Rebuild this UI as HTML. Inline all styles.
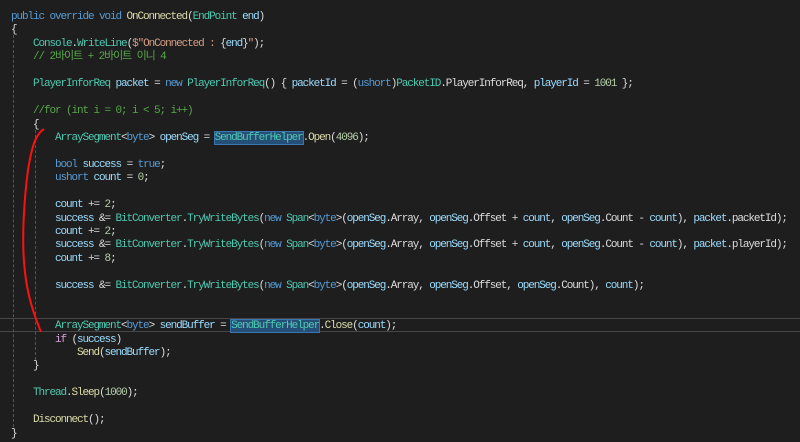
<!DOCTYPE html>
<html><head><meta charset="utf-8"><style>
html,body{margin:0;padding:0;background:#1e1e1e;width:800px;height:442px;overflow:hidden;position:relative}
#code{position:absolute;left:11px;top:11px;font-family:"Liberation Mono","Noto Sans CJK KR",monospace;font-size:11px;letter-spacing:-1.1px;color:#dcdcdc}
.l{height:13.45px;line-height:13.45px;white-space:pre}
.k{color:#569cd6}.t{color:#4ec9b0}.m{color:#dcdcaa}.v{color:#9cdcfe}.c{color:#57a64a}.n{color:#b5cea8}.s{color:#d69d85}.p{color:#d8a0df}
.sel{background:#264f78;outline:1px solid #3b76b0}
.guide{position:absolute;width:0;border-left:1px dashed #555}
</style></head><body>
<div style="position:absolute;left:0;top:318px;width:800px;height:12px;border-top:1px solid #464646;border-bottom:1px solid #464646"></div>
<div class="guide" style="left:13px;top:35px;height:392px"></div>
<div class="guide" style="left:35px;top:130px;height:230px"></div>
<div id="code"><div class="l"><span class="k">public override void</span> <span class="m">OnConnected</span>(<span class="t">EndPoint</span> <span class="v">end</span>)</div><div class="l">{</div><div class="l">    <span class="t">Console</span>.<span class="t">WriteLine</span>(<span class="s">$"OnConnected : </span>{<span class="v">end</span>}<span class="s">"</span>);</div><div class="l"><span class="c">    // 2바이트 + 2바이트 이니 4</span></div><div class="l"> </div><div class="l">    <span class="t">PlayerInforReq</span> <span class="v">packet</span> = <span class="k">new</span> <span class="t">PlayerInforReq</span>() { <span class="v">packetId</span> = (<span class="k">ushort</span>)<span class="t">PacketID</span>.PlayerInforReq, <span class="v">playerId</span> = <span class="n">1001</span> };</div><div class="l"> </div><div class="l"><span class="c">    //for (int i = 0; i &lt; 5; i++)</span></div><div class="l">    {</div><div class="l">        <span class="t">ArraySegment</span>&lt;<span class="k">byte</span>&gt; <span class="v">openSeg</span> = <span class="t sel">SendBufferHelper</span>.<span class="m">Open</span>(<span class="n">4096</span>);</div><div class="l"> </div><div class="l">        <span class="k">bool</span> <span class="v">success</span> = <span class="k">true</span>;</div><div class="l">        <span class="k">ushort</span> <span class="v">count</span> = <span class="n">0</span>;</div><div class="l"> </div><div class="l">        <span class="v">count</span> += <span class="n">2</span>;</div><div class="l">        <span class="v">success</span> &amp;= <span class="t">BitConverter</span>.<span class="t">TryWriteBytes</span>(<span class="k">new</span> <span class="t">Span</span>&lt;<span class="k">byte</span>&gt;(<span class="v">openSeg</span>.Array, <span class="v">openSeg</span>.Offset + <span class="v">count</span>, <span class="v">openSeg</span>.Count - <span class="v">count</span>), <span class="v">packet</span>.packetId);</div><div class="l">        <span class="v">count</span> += <span class="n">2</span>;</div><div class="l">        <span class="v">success</span> &amp;= <span class="t">BitConverter</span>.<span class="t">TryWriteBytes</span>(<span class="k">new</span> <span class="t">Span</span>&lt;<span class="k">byte</span>&gt;(<span class="v">openSeg</span>.Array, <span class="v">openSeg</span>.Offset + <span class="v">count</span>, <span class="v">openSeg</span>.Count - <span class="v">count</span>), <span class="v">packet</span>.playerId);</div><div class="l">        <span class="v">count</span> += <span class="n">8</span>;</div><div class="l"> </div><div class="l">        <span class="v">success</span> &amp;= <span class="t">BitConverter</span>.<span class="t">TryWriteBytes</span>(<span class="k">new</span> <span class="t">Span</span>&lt;<span class="k">byte</span>&gt;(<span class="v">openSeg</span>.Array, <span class="v">openSeg</span>.Offset, <span class="v">openSeg</span>.Count), <span class="v">count</span>);</div><div class="l"> </div><div class="l"> </div><div class="l">        <span class="t">ArraySegment</span>&lt;<span class="k">byte</span>&gt; <span class="v">sendBuffer</span> = <span class="t sel">SendBufferHelper</span>.<span class="m">Close</span>(<span class="v">count</span>);</div><div class="l">        <span class="p">if</span> (<span class="v">success</span>)</div><div class="l">            <span class="m">Send</span>(<span class="v">sendBuffer</span>);</div><div class="l">    }</div><div class="l"> </div><div class="l">    <span class="t">Thread</span>.<span class="m">Sleep</span>(<span class="n">1000</span>);</div><div class="l"> </div><div class="l">    <span class="m">Disconnect</span>();</div><div class="l">}</div></div>
<svg width="800" height="442" style="position:absolute;left:0;top:0">
<path d="M44,129 C36,134 32,145 28,170 C24,200 22,235 24,262 C26,290 32,310 41,332" fill="none" stroke="#ff1010" stroke-width="2"/>
</svg>
</body></html>
